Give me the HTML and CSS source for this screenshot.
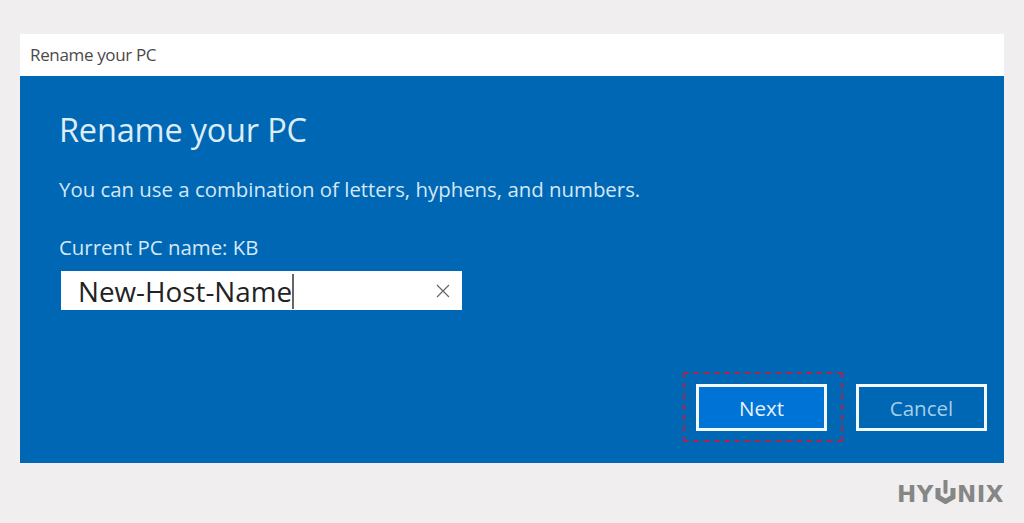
FILE: index.html
```html
<!DOCTYPE html>
<html lang="en">
<head>
<meta charset="utf-8">
<title>Rename your PC</title>
<link rel="stylesheet" href="styles.css">
</head>
<body>
<main class="dialog">
  <header class="titlebar">Rename your PC</header>
  <section class="panel">
    <h1 class="heading">Rename your PC</h1>
    <p class="hint">You can use a combination of letters, hyphens, and numbers.</p>
    <p class="current">Current PC name: KB</p>
    <div class="field">
      <span class="value">New-Host-Name</span><span class="caret"></span>
      <svg class="clear" width="14" height="14" viewBox="0 0 14 14"><path d="M1 1l12 12M13 1L1 13" stroke="#666" stroke-width="1.2" fill="none"/></svg>
    </div>
    <div class="actions">
      <div class="focus-ring"><button class="btn btn-primary">Next</button></div>
      <button class="btn btn-cancel">Cancel</button>
    </div>
  </section>
</main>
<footer class="brand">
  <span class="logo">HY<svg class="logo-mark" width="23" height="24" viewBox="0 0 23 24"><path d="M4 8v9l7.500 4.500L19 17V8" fill="none" stroke="#868686" stroke-width="5"/><path d="M11.500 1v11" stroke="#868686" stroke-width="4" stroke-linecap="round"/></svg>NIX</span>
</footer>
</body>
</html>
```
FILE: styles.css
```css
* { box-sizing: border-box; }
html, body { margin: 0; height: 100%; }
body {
  width: 1024px;
  height: 523px;
  overflow: hidden;
  background: #f0eeee;
  padding: 34px 20px 0;
  font-family: "Open Sans", "Noto Sans", sans-serif;
}
.dialog { display: flex; flex-direction: column; height: 429px; }
.titlebar {
  height: 42px;
  flex: none;
  background: #fff;
  color: #4a4a4a;
  font-size: 17px;
  letter-spacing: -0.35px;
  line-height: 41px;
  padding-left: 10px;
}
.panel {
  flex: 1;
  background: #0067b4;
  color: #d4e8f6;
  padding: 32px 0 0 39px;
  display: flex;
  flex-direction: column;
}
.heading {
  margin: 0;
  font-size: 32.5px;
  font-weight: 400;
  line-height: 44px;
  letter-spacing: -0.2px;
  color: #dcedf8;
}
.hint {
  margin: 24px 0 0;
  font-size: 20.4px;
  line-height: 26px;
}
.current {
  margin: 32px 0 0;
  font-size: 20.4px;
  line-height: 26px;
}
.field {
  margin: 11px 0 0 2px;
  width: 401px;
  height: 39px;
  background: #fff;
  display: flex;
  align-items: center;
  padding: 1px 12px 0 17px;
  color: #222;
  font-size: 27.8px;
}
.value { line-height: 38px; }
.caret { width: 2px; height: 35px; background: #666; }
.clear { margin-left: auto; }
.actions {
  margin: 62px 0 0;
  padding-right: 17px;
  display: flex;
  justify-content: flex-end;
  align-items: flex-start;
  gap: 13px;
}
.focus-ring {
  border: 2px dashed #a3274f;
  padding: 10px 15px 0 11px;
  width: 160px;
  height: 70px;
}
.btn {
  width: 131px;
  height: 47px;
  border: 3px solid #f4f8fb;
  font-family: inherit;
  font-size: 20.5px;
  padding: 0;
  display: block;
}
.btn-primary { background: #0073d6; color: #e6f2fb; }
.btn-cancel { margin-top: 12px; background: #0067b4; color: #a6cde8; }
.brand {
  display: flex;
  justify-content: flex-end;
  padding: 19px 0 0;
}
.logo {
  display: flex;
  align-items: center;
  font-family: "DejaVu Sans", sans-serif;
  font-weight: 700;
  font-size: 23px;
  line-height: 24px;
  color: #868686;
  letter-spacing: 0.5px;
}
.logo-mark { margin: -4px 0 0; }
```
